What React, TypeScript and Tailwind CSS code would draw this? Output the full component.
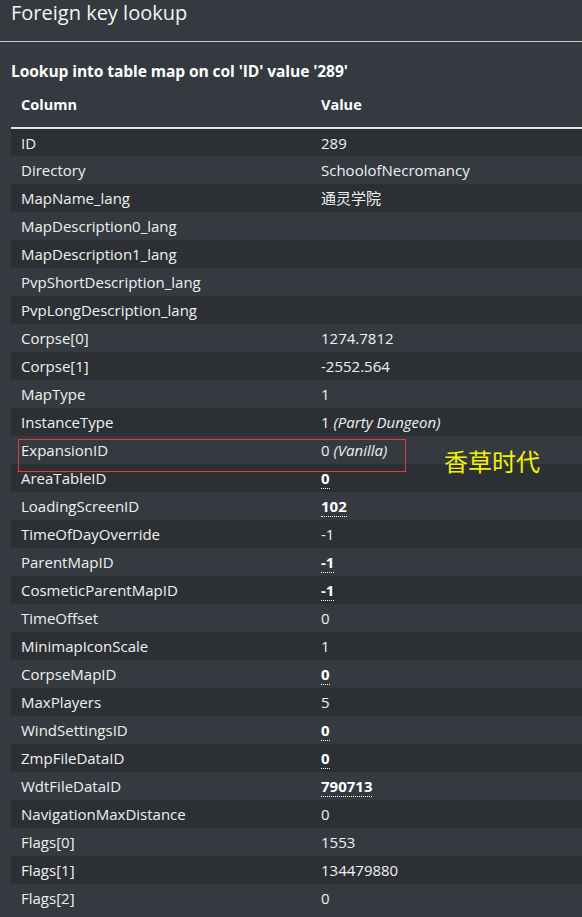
import React from 'react'

type Row = {
  col: string
  value?: string
  note?: string
  link?: boolean
}

const rows: Row[] = [
  { col: 'ID', value: '289' },
  { col: 'Directory', value: 'SchoolofNecromancy' },
  { col: 'MapName_lang', value: '通灵学院' },
  { col: 'MapDescription0_lang' },
  { col: 'MapDescription1_lang' },
  { col: 'PvpShortDescription_lang' },
  { col: 'PvpLongDescription_lang' },
  { col: 'Corpse[0]', value: '1274.7812' },
  { col: 'Corpse[1]', value: '-2552.564' },
  { col: 'MapType', value: '1' },
  { col: 'InstanceType', value: '1', note: '(Party Dungeon)' },
  { col: 'ExpansionID', value: '0', note: '(Vanilla)' },
  { col: 'AreaTableID', value: '0', link: true },
  { col: 'LoadingScreenID', value: '102', link: true },
  { col: 'TimeOfDayOverride', value: '-1' },
  { col: 'ParentMapID', value: '-1', link: true },
  { col: 'CosmeticParentMapID', value: '-1', link: true },
  { col: 'TimeOffset', value: '0' },
  { col: 'MinimapIconScale', value: '1' },
  { col: 'CorpseMapID', value: '0', link: true },
  { col: 'MaxPlayers', value: '5' },
  { col: 'WindSettingsID', value: '0', link: true },
  { col: 'ZmpFileDataID', value: '0', link: true },
  { col: 'WdtFileDataID', value: '790713', link: true },
  { col: 'NavigationMaxDistance', value: '0' },
  { col: 'Flags[0]', value: '1553' },
  { col: 'Flags[1]', value: '134479880' },
  { col: 'Flags[2]', value: '0' },
]

const sans = 'font-["Open_Sans","Noto_Sans_CJK_SC",sans-serif]'

export default function App() {
  return (
    <div className={`relative h-[917px] overflow-hidden bg-[#343a40] text-[#f0f0f0] ${sans}`}>
      {/* Modal header */}
      <div className="flex h-[42px] items-start border-b border-[#c8ccd0] px-[11px] pt-[1px]">
        <h5 className="text-[20px] leading-[24px] text-[#f5f5f5]">Foreign key lookup</h5>
      </div>

      {/* Modal body */}
      <div className="pl-[11px]">
        <div className="pt-[19px] text-[15.6px] font-bold leading-[20px] tracking-[-0.1px] text-white">
          Lookup into table map on col 'ID' value '289'
        </div>

        <table className="mt-[6px] w-full border-collapse text-left text-[15px]">
          <thead>
            <tr className="border-b-2 border-[#dee2e6]">
              <th className="w-[310px] pb-[12px] pl-[10px] pt-[8px] text-[14.5px] font-bold leading-[20px] text-white">
                Column
              </th>
              <th className="pb-[12px] pt-[8px] text-[14.5px] font-bold leading-[20px] text-white">Value</th>
            </tr>
          </thead>
          <tbody>
            {rows.map((r, i) => (
              <tr key={r.col} className={`h-[28px] ${i % 2 === 0 ? 'bg-[#2c3035]' : ''}`}>
                <td className="pl-[10px] leading-[20px]">{r.col}</td>
                <td className="leading-[20px]">
                  {r.link ? (
                    <span className="border-b border-dotted border-white font-bold text-white">
                      {r.value}
                    </span>
                  ) : (
                    <span>{r.value}</span>
                  )}
                  {r.note && <i className="ml-[4px]">{r.note}</i>}
                </td>
              </tr>
            ))}
          </tbody>
        </table>
      </div>

      {/* Annotation overlay */}
      <div className="absolute left-[18px] top-[439px] h-[33px] w-[388px] border border-[#d9403f]" />
      <div className='absolute left-[444px] top-[446px] font-["Noto_Sans_CJK_SC",sans-serif] text-[24px] leading-[30px] text-[#f4f400]'>
        香草时代
      </div>
    </div>
  )
}
